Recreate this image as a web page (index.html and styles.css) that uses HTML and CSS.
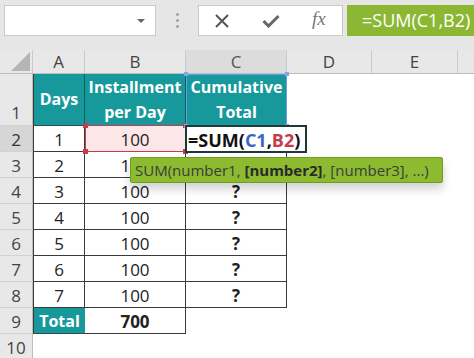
FILE: index.html
```html
<!DOCTYPE html>
<html>
<head>
<meta charset="utf-8">
<link rel="stylesheet" href="styles.css">
</head>
<body>
<div class="topbar">
  <div class="namebox"><span class="dd"></span></div>
  <div class="dots"><i></i><i></i><i></i></div>
  <div class="fbtns">
    <svg class="ic-x" width="14" height="14" viewBox="0 0 14 14"><path d="M1 1 L13 13 M13 1 L1 13" stroke="#555" stroke-width="2" fill="none"/></svg>
    <svg class="ic-ok" width="18" height="14" viewBox="0 0 18 14"><path d="M1.5 7 L6.5 12 L16.5 2" stroke="#666" stroke-width="3" fill="none"/></svg>
    <span class="fx">fx</span>
  </div>
  <div class="fbox">=SUM(C1,B2)</div>
</div>
<div class="sheet">
  <div class="ch corner"><span class="tri"></span></div>
  <div class="ch">A</div><div class="ch">B</div><div class="ch act">C</div><div class="ch">D</div><div class="ch">E</div><div class="ch last"></div>

  <div class="rh r1">1</div>
  <div class="c teal ta bl">Days</div><div class="c teal ta">Installment<br>per Day</div><div class="c teal">Cumulative<br>Total</div><div class="c"></div><div class="c"></div><div class="c"></div>

  <div class="rh act">2</div>
  <div class="c t bl">1</div><div class="c t pink">100</div><div class="c t"></div><div class="c"></div><div class="c"></div><div class="c"></div>

  <div class="rh">3</div>
  <div class="c t bl">2</div><div class="c t">100</div><div class="c t q">?</div><div class="c"></div><div class="c"></div><div class="c"></div>

  <div class="rh">4</div>
  <div class="c t bl">3</div><div class="c t">100</div><div class="c t q">?</div><div class="c"></div><div class="c"></div><div class="c"></div>

  <div class="rh">5</div>
  <div class="c t bl">4</div><div class="c t">100</div><div class="c t q">?</div><div class="c"></div><div class="c"></div><div class="c"></div>

  <div class="rh">6</div>
  <div class="c t bl">5</div><div class="c t">100</div><div class="c t q">?</div><div class="c"></div><div class="c"></div><div class="c"></div>

  <div class="rh">7</div>
  <div class="c t bl">6</div><div class="c t">100</div><div class="c t q">?</div><div class="c"></div><div class="c"></div><div class="c"></div>

  <div class="rh">8</div>
  <div class="c t bl">7</div><div class="c t">100</div><div class="c t q">?</div><div class="c"></div><div class="c"></div><div class="c"></div>

  <div class="rh">9</div>
  <div class="c teal tot bl">Total</div><div class="c t b">700</div><div class="c"></div><div class="c"></div><div class="c"></div><div class="c"></div>

  <div class="rh">10</div>
  <div class="c"></div><div class="c"></div><div class="c"></div><div class="c"></div><div class="c"></div><div class="c"></div>

  <div class="sel-b"><i class="h tl"></i><i class="h tr"></i><i class="h bl2"></i><i class="h br"></i></div>
  <div class="sel-c"><i class="h tl"></i><i class="h tr"></i><i class="h bl2"></i><i class="h br"></i></div>
  <div class="edit">=SUM(<span class="rc">C1</span>,<span class="rb">B2</span>)</div>
  <div class="tip">SUM(number1, <b>[number2]</b>, [number3], ...)</div>
</div>
</body>
</html>
```
FILE: styles.css
```css
html, body {
  margin: 0;
  padding: 0;
  background: #fff;
  font-family: "Open Sans", "DejaVu Sans", sans-serif;
  width: 474px;
  height: 358px;
  overflow: hidden;
}

.topbar {
  height: 50px;
  background: #e6e6e6;
  display: flex;
  align-items: flex-start;
  padding-top: 5px;
  box-sizing: border-box;
}

.namebox {
  margin-left: 4px;
  width: 152px;
  height: 31px;
  box-sizing: border-box;
  background: #fff;
  border: 1px solid #c8c8c8;
  position: relative;
}
.dd {
  position: absolute;
  right: 10px;
  top: 13px;
  width: 0;
  height: 0;
  border-left: 4px solid transparent;
  border-right: 4px solid transparent;
  border-top: 4px solid #666;
}

.dots {
  width: 42px;
  height: 31px;
  display: flex;
  flex-direction: column;
  align-items: center;
  justify-content: center;
  gap: 3px;
}
.dots i {
  display: block;
  width: 3px;
  height: 3px;
  border-radius: 50%;
  background: #a0a0a0;
}

.fbtns {
  width: 145px;
  height: 31px;
  box-sizing: border-box;
  background: #fff;
  border: 1px solid #c8c8c8;
  display: flex;
  align-items: center;
}
.ic-x { margin-left: 16px; }
.ic-ok { margin-left: 33px; }
.fx {
  margin-left: 32px;
  font-family: "Liberation Serif", serif;
  font-style: italic;
  font-size: 19px;
  color: #777;
  margin-top: -3px;
}

.fbox {
  margin-left: 4px;
  flex: 1;
  height: 31px;
  background: #8cb733;
  color: #fff;
  font-size: 18px;
  line-height: 31px;
  padding-left: 15px;
  white-space: nowrap;
}

.sheet {
  position: relative;
  display: grid;
  grid-template-columns: 33px 52px 101px 101px 85px 86px 16px;
  grid-template-rows: 24px 52px repeat(9, 26px);
  font-size: 17px;
  color: #222;
}

.ch {
  background: #e8e8e8;
  border-right: 1px solid #cacaca;
  border-bottom: 1px solid #bdbdbd;
  color: #444;
  text-align: center;
  line-height: 24px;
  font-size: 17px;
}
.ch.act { background: #dcdcdc; color: #555; }
.ch.last { border-right: none; }
.corner { position: relative; }
.tri {
  position: absolute;
  right: 2px;
  bottom: 2px;
  width: 0;
  height: 0;
  border-left: 19px solid transparent;
  border-bottom: 19px solid #b5b5b5;
}

.rh {
  background: #e8e8e8;
  border-right: 1px solid #bdbdbd;
  border-bottom: 1px solid #d2d2d2;
  color: #444;
  text-align: center;
  line-height: 24px;
  padding-top: 2px;
  box-sizing: border-box;
  font-size: 17px;
}
.rh.r1 {
  display: flex;
  align-items: flex-end;
  justify-content: center;
  line-height: 24px;
  padding-top: 0;
}
.rh.act { background: #d6d6d6; color: #333; }

.c {
  box-sizing: border-box;
  text-align: center;
  line-height: 24px;
  padding-top: 2px;
  white-space: nowrap;
}
.t {
  border-right: 1px solid #3a3a3a;
  border-bottom: 1px solid #3a3a3a;
}
.bl { border-left: 1px solid #3a3a3a; }
.teal {
  background: #17999b;
  color: #fff;
  font-weight: bold;
  font-size: 16px;
  display: flex;
  align-items: center;
  justify-content: center;
  line-height: 25px;
  padding-top: 0;
  border-bottom: 1px solid #2e4d4d;
}
.ta { border-right: 1px solid #0d5e5e; }
.tot { line-height: 24px; }
.pink { background: #fce6e8; }
.q { font-weight: bold; }
.b { font-weight: bold; }

.sel-b {
  position: absolute;
  left: 85px;
  top: 75px;
  width: 101px;
  height: 27px;
  box-sizing: border-box;
  border: 1px solid #c23d4d;
}
.sel-b .h { background: #c23d4d; }
.sel-c {
  position: absolute;
  left: 186px;
  top: 24px;
  width: 101px;
  height: 52px;
  box-sizing: border-box;
  border: 1px solid #6f9be0;
}
.sel-c .h { background: #7fa8e6; width: 4px; height: 4px; }
.h {
  position: absolute;
  display: block;
  width: 5px;
  height: 5px;
}
.h.tl { left: -3px; top: -3px; }
.h.tr { right: -3px; top: -3px; }
.h.bl2 { left: -3px; bottom: -3px; }
.h.br { right: -3px; bottom: -3px; }

.edit {
  position: absolute;
  left: 185px;
  top: 75px;
  width: 122px;
  height: 28px;
  box-sizing: border-box;
  border: 2px solid #1e3a38;
  background: #fff;
  font-weight: bold;
  font-size: 18px;
  line-height: 26px;
  padding-left: 1px;
  color: #111;
  white-space: nowrap;
}
.rc { color: #3a66c4; }
.rb { color: #c23d4d; }

.tip {
  position: absolute;
  left: 130px;
  top: 107px;
  width: 313px;
  height: 26px;
  box-sizing: border-box;
  background: #8cbb30;
  border: 1px solid #729a26;
  border-radius: 2px;
  color: #3c3c3c;
  font-size: 15px;
  line-height: 24px;
  padding-left: 4px;
  white-space: nowrap;
  box-shadow: 0 6px 10px rgba(0, 0, 0, 0.18);
}
.tip b { color: #2a2a2a; }
```
